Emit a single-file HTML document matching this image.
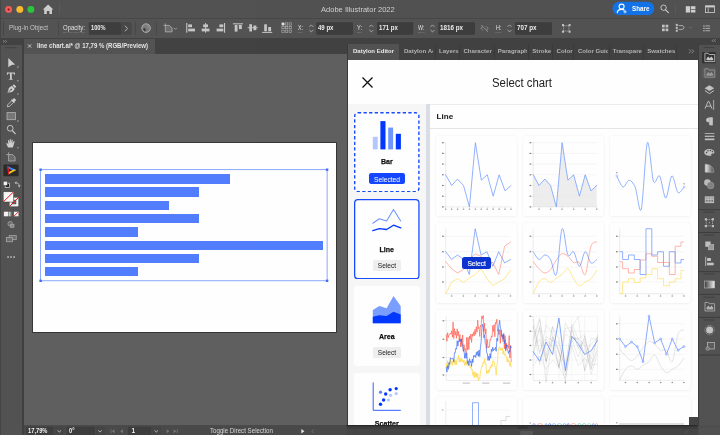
<!DOCTYPE html>
<html>
<head>
<meta charset="utf-8">
<title>Adobe Illustrator 2022</title>
<style>
*{box-sizing:border-box;margin:0;padding:0}
html,body{width:720px;height:435px;overflow:hidden;background:#5d5d5d}
body{font-family:"Liberation Sans",sans-serif;position:relative;color:#d6d6d6}
.a{position:absolute}
.t{position:absolute;white-space:nowrap;line-height:1}
#root{position:absolute;left:0;top:0;width:720px;height:435px;overflow:hidden;background:#606060;will-change:transform;opacity:0.9999}
#appbar{left:0;top:0;width:720px;height:18px;background:#525252}
#appline{left:0;top:17.9px;width:720px;height:1px;background:#484848}
#ctrl{left:0;top:18.9px;width:720px;height:19.1px;background:#535353}
#tabbar{left:0;top:37.8px;width:348px;height:16.7px;background:#424242}
#doctab{left:23.8px;top:38.8px;width:131.2px;height:15.7px;background:#535353}
.inp{position:absolute;top:22.5px;height:12px;background:#3d3d3d;border-radius:1px}
.lbl{position:absolute;white-space:nowrap;line-height:1;font-size:6.6px;color:#d2d2d2;top:25.2px}
.val{position:absolute;white-space:nowrap;line-height:1;font-size:6.6px;color:#ececec;top:25.2px}
.vd{position:absolute;top:21px;width:1px;height:15px;background:#444}
#tools{left:0;top:38px;width:23px;height:397px;background:#535353}
#toolshead{left:0;top:37.8px;width:23px;height:6.8px;background:#424242}
#toolsedge{left:22.2px;top:38px;width:1.5px;height:397px;background:#404040}
#status{left:23.7px;top:425.5px;width:697px;height:10px;background:#4a4a4a}
#art{left:33px;top:143px;width:302.5px;height:189px;background:#fff;box-shadow:0 0 0 0.8px #2c2c2c}
.bar{position:absolute;left:45.4px;height:9.4px;background:#527fff}
#ptabs{left:348px;top:43.5px;width:350px;height:16.5px;background:#424242}
#ptabA{left:348px;top:44.5px;width:51px;height:15.5px;background:#535353}
.pt{position:absolute;white-space:nowrap;line-height:1;font-size:6.3px;font-weight:bold;color:#bdbdbd;top:48px}
#panel{left:348px;top:60px;width:349.5px;height:365.3px;background:#fff;overflow:hidden}
#side{left:0;top:44px;width:78.3px;height:330px;background:#f7f7f7}
#stripe{left:78.3px;top:44px;width:3.7px;height:330px;background:#dbdee7}
#sechead{left:81.7px;top:44.4px;width:270px;height:24.2px;background:#fff;border-bottom:1.2px solid #e6e6e9;border-top:1px solid #ececee}
.card{position:absolute;left:6.2px;width:65.6px;height:80.4px;background:#fff;border-radius:3px}
.ctitle{position:absolute;left:0;width:100%;text-align:center;font-size:8px;font-weight:bold;color:#111;line-height:1;top:47px;transform:scaleX(.88);-webkit-text-stroke:0.25px #111}
.btn{position:absolute;left:18.8px;top:61.1px;width:28px;height:10.8px;border-radius:1.5px;background:#efefef;color:#222;font-size:6.6px;line-height:10.8px;text-align:center;padding-top:0.9px}
#dock{left:698.5px;top:44.6px;width:21.5px;height:391px;background:#535353}
#dockedge{left:697.5px;top:43px;width:1.2px;height:392px;background:#3e3e3e}
#docktop{left:697.5px;top:38px;width:22.5px;height:6.8px;background:#424242}
</style>
</head>
<body>
<div id="root">

<div class="a" id="appbar"></div>
<div class="a" id="appline"></div>
<div class="a" id="ctrl"></div>
<div class="a" id="tabbar"></div>
<div class="a" id="doctab"></div>
<svg class="a" style="left:0;top:0" width="720" height="60" viewBox="0 0 720 60"><rect x="0" y="0" width="0.9" height="60" fill="#444"/>
<circle cx="8.6" cy="9.4" r="3.45" fill="#f45c58"/><circle cx="8.6" cy="9.4" r="1.0" fill="#7a1410"/>
<circle cx="19.8" cy="9.4" r="3.45" fill="#fbbb2d"/>
<circle cx="30.9" cy="9.4" r="3.45" fill="#2bc640"/>
<path d="M48.1,4.6 L53.4,9.4 L52,9.4 L52,13.9 L49.4,13.9 L49.4,10.9 L46.8,10.9 L46.8,13.9 L44.2,13.9 L44.2,9.4 L42.8,9.4 Z" fill="#cdcdcd"/>
<rect x="59.2" y="3.3" width="0.8" height="11.2" fill="#5d5d5d"/>
<rect x="612.5" y="1.8" width="41.8" height="13.3" rx="6.65" fill="#1473e6"/>
<circle cx="621.6" cy="6.6" r="2.5" fill="none" stroke="#fff" stroke-width="1.1"/>
<path d="M617.3,12.6 C617.6,9.8 619.6,9.4 621.6,9.4 C622.8,9.4 623.6,9.6 624.2,10" fill="none" stroke="#fff" stroke-width="1.1" stroke-linecap="round"/>
<path d="M623.4,11.8 H626.6 M625,10.2 V13.4" stroke="#fff" stroke-width="0.8" fill="none"/>
<circle cx="663.6" cy="7.7" r="2.7" fill="none" stroke="#d0d0d0" stroke-width="0.9"/><path d="M665.6,9.8 L668.4,12.7" stroke="#d0d0d0" stroke-width="1.1" stroke-linecap="round"/>
<rect x="675.2" y="3.7" width="0.8" height="10.6" fill="#5d5d5d"/>
<rect x="685.8" y="6.2" width="4.4" height="6.3" fill="#cfcfcf"/><rect x="691" y="6.2" width="4.4" height="2.8" fill="#cfcfcf"/><rect x="691" y="9.7" width="4.4" height="2.8" fill="#cfcfcf"/>
<rect x="705.6" y="5.8" width="8.8" height="6.8" fill="none" stroke="#cfcfcf" stroke-width="0.8"/><rect x="705.6" y="5.8" width="8.8" height="1.6" fill="#cfcfcf"/><rect x="707.8" y="7.4" width="0.7" height="5" fill="#cfcfcf"/>
<rect x="3" y="21.5" width="0.8" height="14" fill="#444"/>
<rect x="58" y="21.5" width="0.8" height="14" fill="#474747"/>
<path d="M63,32.6 H85" stroke="#9a9a9a" stroke-width="0.5" stroke-dasharray="0.7 0.5"/>
<rect x="88.8" y="22.2" width="32.6" height="12.6" rx="1" fill="#3e3e3e"/>
<rect x="121.9" y="22.2" width="9.6" height="12.6" rx="1" fill="#474747"/>
<path d="M125.2,26 L127.6,28.5 L125.2,31" fill="none" stroke="#d0d0d0" stroke-width="0.8" stroke-linecap="round" stroke-linejoin="round"/>
<rect x="135" y="21.5" width="0.8" height="14" fill="#474747"/>
<rect x="156" y="21.5" width="0.8" height="14" fill="#474747"/>
<circle cx="146.1" cy="28.1" r="4.3" fill="#7d7d7d" stroke="#b4b4b4" stroke-width="0.9"/><path d="M143,29 C143.5,27.5 145,27.8 145.6,29 C146.2,30.4 145.2,31.8 144.2,31.2 Z" fill="#3c3c3c"/><path d="M146.5,24.6 C148,25.2 148.8,26.4 148,27.6" fill="none" stroke="#a8a8a8" stroke-width="0.6"/>
<path d="M165.3,25.4 H169.4 L172.1,28 V31.9 H165.3 Z" fill="#6e6e6e" stroke="#bdbdbd" stroke-width="0.7" stroke-linejoin="round"/><path d="M163.4,25.4 H165.3 M165.3,23.4 V25.4" stroke="#bdbdbd" stroke-width="0.7"/>
<path d="M173.9,27.8 L175.4,29.3 L176.9,27.8" fill="none" stroke="#bdbdbd" stroke-width="0.7"/>
<rect x="186.2" y="23" width="1.1" height="9.7" fill="#c6c6c6"/><rect x="188.2" y="24.4" width="3.8" height="2.8" fill="#c6c6c6"/><rect x="188.2" y="28.6" width="6.8" height="2.8" fill="#c6c6c6"/>
<rect x="205.1" y="23" width="1" height="9.7" fill="#c6c6c6"/><rect x="203.2" y="24.4" width="4.8" height="2.8" fill="#c6c6c6"/><rect x="201.7" y="28.6" width="7.8" height="2.8" fill="#c6c6c6"/>
<rect x="224" y="23" width="1.1" height="9.7" fill="#c6c6c6"/><rect x="219.4" y="24.4" width="3.9" height="2.8" fill="#c6c6c6"/><rect x="216.6" y="28.6" width="6.7" height="2.8" fill="#c6c6c6"/>
<rect x="232.9" y="23.3" width="10.1" height="1" fill="#c6c6c6"/><rect x="234.7" y="24.9" width="2.8" height="6.7" fill="#c6c6c6"/><rect x="238.9" y="24.9" width="2.9" height="4.2" fill="#c6c6c6"/>
<rect x="247.6" y="27.3" width="10.2" height="0.9" fill="#c6c6c6"/><rect x="249.3" y="24.2" width="2.7" height="7.3" fill="#c6c6c6"/><rect x="253.4" y="25.5" width="2.9" height="4.7" fill="#c6c6c6"/>
<rect x="262.1" y="31.9" width="10.1" height="1" fill="#c6c6c6"/><rect x="264.2" y="24.3" width="2.7" height="7" fill="#c6c6c6"/><rect x="268.2" y="27" width="2.9" height="4.3" fill="#c6c6c6"/>
<rect x="281.85" y="22.85" width="2.3" height="2.3" fill="#f0f0f0" stroke="#bdbdbd" stroke-width="0.55"/>
<rect x="285.45" y="22.85" width="2.3" height="2.3" fill="none" stroke="#bdbdbd" stroke-width="0.55"/>
<rect x="289.05" y="22.85" width="2.3" height="2.3" fill="none" stroke="#bdbdbd" stroke-width="0.55"/>
<rect x="281.85" y="26.45" width="2.3" height="2.3" fill="none" stroke="#bdbdbd" stroke-width="0.55"/>
<rect x="285.45" y="26.45" width="2.3" height="2.3" fill="none" stroke="#bdbdbd" stroke-width="0.55"/>
<rect x="289.05" y="26.45" width="2.3" height="2.3" fill="none" stroke="#bdbdbd" stroke-width="0.55"/>
<rect x="281.85" y="30.05" width="2.3" height="2.3" fill="none" stroke="#bdbdbd" stroke-width="0.55"/>
<rect x="285.45" y="30.05" width="2.3" height="2.3" fill="none" stroke="#bdbdbd" stroke-width="0.55"/>
<rect x="289.05" y="30.05" width="2.3" height="2.3" fill="none" stroke="#bdbdbd" stroke-width="0.55"/>
<path d="M297.6,32.5 H302.5" stroke="#9a9a9a" stroke-width="0.5" stroke-dasharray="0.7 0.5"/>
<path d="M309.6,26.6 L311.3,24.9 L313.0,26.6 M309.6,30.2 L311.3,31.9 L313.0,30.2" fill="none" stroke="#c8c8c8" stroke-width="0.7" stroke-linecap="round" stroke-linejoin="round"/>
<rect x="316.3" y="22.2" width="36.7" height="12.6" rx="1" fill="#3e3e3e"/>
<path d="M357,32.5 H362" stroke="#9a9a9a" stroke-width="0.5" stroke-dasharray="0.7 0.5"/>
<path d="M369.6,26.6 L371.3,24.9 L373.0,26.6 M369.6,30.2 L371.3,31.9 L373.0,30.2" fill="none" stroke="#c8c8c8" stroke-width="0.7" stroke-linecap="round" stroke-linejoin="round"/>
<rect x="377" y="22.2" width="36.2" height="12.6" rx="1" fill="#3e3e3e"/>
<path d="M418,32.5 H424.4" stroke="#9a9a9a" stroke-width="0.5" stroke-dasharray="0.7 0.5"/>
<path d="M430.8,26.6 L432.5,24.9 L434.2,26.6 M430.8,30.2 L432.5,31.9 L434.2,30.2" fill="none" stroke="#c8c8c8" stroke-width="0.7" stroke-linecap="round" stroke-linejoin="round"/>
<rect x="438.3" y="22.2" width="36.7" height="12.6" rx="1" fill="#3e3e3e"/>
<path d="M495.5,32.5 H500.9" stroke="#9a9a9a" stroke-width="0.5" stroke-dasharray="0.7 0.5"/>
<path d="M507.8,26.6 L509.5,24.9 L511.2,26.6 M507.8,30.2 L509.5,31.9 L511.2,30.2" fill="none" stroke="#c8c8c8" stroke-width="0.7" stroke-linecap="round" stroke-linejoin="round"/>
<rect x="515" y="22.2" width="37" height="12.6" rx="1" fill="#3e3e3e"/>
<g fill="none" stroke="#a0a0a0" stroke-width="0.8" stroke-linecap="round"><path d="M482.2,27 C481,27 480.6,28.2 481.4,29 L482.6,30.2"/><path d="M486.8,29.8 C488,29.8 488.4,28.6 487.6,27.8 L486.4,26.6"/><path d="M481.6,25.2 L487.6,31.6"/></g>
<g fill="none" stroke="#c6c6c6" stroke-width="0.7"><rect x="563.6" y="25.7" width="5.4" height="5.4" stroke-dasharray="1.2 0.8"/></g><g fill="#c6c6c6"><rect x="562" y="24.1" width="2" height="2"/><rect x="568.6" y="24.1" width="2" height="2"/><rect x="562" y="30.7" width="2" height="2"/><rect x="568.6" y="30.7" width="2" height="2"/></g>
<g fill="#c2c2c2"><rect x="662" y="24.7" width="2.7" height="2.7"/><rect x="665.6" y="24.7" width="2.7" height="2.7"/><rect x="662" y="28.5" width="2.7" height="2.7"/><rect x="665.6" y="28.5" width="2.7" height="2.7"/></g>
<g fill="#c2c2c2"><rect x="675.8" y="23.9" width="2" height="2"/><rect x="675.8" y="26.8" width="2" height="2"/><rect x="675.8" y="29.7" width="2" height="2"/></g><path d="M678.6,25.6 H682 C684.6,25.6 684.6,29.4 682,29.4 H678.6" fill="none" stroke="#c2c2c2" stroke-width="0.8"/>
<path d="M689,26.8 L690.5,28.3 L692,26.8" fill="none" stroke="#777" stroke-width="0.7"/>
<g fill="#b8b8b8"><rect x="703.3" y="25.3" width="1.3" height="1.3"/><rect x="703.3" y="27.7" width="1.3" height="1.3"/><rect x="703.3" y="30.1" width="1.3" height="1.3"/><rect x="705.4" y="25.5" width="4.6" height="0.9"/><rect x="705.4" y="27.9" width="4.6" height="0.9"/><rect x="705.4" y="30.3" width="4.6" height="0.9"/></g>
<path d="M28.2,44.6 L31,47.4 M31,44.6 L28.2,47.4" stroke="#e0e0e0" stroke-width="0.8" stroke-linecap="round"/>
<path d="M3.2,40.4 L4.4,41.5 L3.2,42.6 M5.4,40.4 L6.6,41.5 L5.4,42.6" fill="none" stroke="#bdbdbd" stroke-width="0.6"/></svg>
<div class="t" style="left:321.23px;top:5.79px;font-size:7.5px;color:#d0d0d0;transform:scaleX(1.005);transform-origin:0 0;">Adobe Illustrator 2022</div>
<div class="t" style="left:632.00px;top:6.08px;font-size:7.1px;color:#ffffff;font-weight:bold;transform:scaleX(0.887);transform-origin:0 0;">Share</div>
<div class="t" style="left:8.70px;top:25.17px;font-size:6.7px;color:#cacaca;transform:scaleX(0.929);transform-origin:0 0;">Plug-in Object</div>
<div class="t" style="left:63.00px;top:25.17px;font-size:6.7px;color:#e2e2e2;transform:scaleX(0.895);transform-origin:0 0;">Opacity:</div>
<div class="t" style="left:90.80px;top:25.27px;font-size:6.7px;color:#ededed;font-weight:bold;transform:scaleX(0.846);transform-origin:0 0;">100%</div>
<div class="t" style="left:297.60px;top:25.27px;font-size:6.7px;color:#e2e2e2;transform:scaleX(0.774);transform-origin:0 0;">X:</div>
<div class="t" style="left:318.30px;top:25.27px;font-size:6.7px;color:#ededed;font-weight:bold;transform:scaleX(0.905);transform-origin:0 0;">49 px</div>
<div class="t" style="left:357.00px;top:25.27px;font-size:6.7px;color:#e2e2e2;transform:scaleX(0.839);transform-origin:0 0;">Y:</div>
<div class="t" style="left:378.80px;top:25.27px;font-size:6.7px;color:#ededed;font-weight:bold;transform:scaleX(0.911);transform-origin:0 0;">171 px</div>
<div class="t" style="left:418.00px;top:25.27px;font-size:6.7px;color:#e2e2e2;transform:scaleX(0.794);transform-origin:0 0;">W:</div>
<div class="t" style="left:440.00px;top:25.27px;font-size:6.7px;color:#ededed;font-weight:bold;transform:scaleX(0.936);transform-origin:0 0;">1816 px</div>
<div class="t" style="left:495.50px;top:25.27px;font-size:6.7px;color:#e2e2e2;transform:scaleX(0.806);transform-origin:0 0;">H:</div>
<div class="t" style="left:516.80px;top:25.27px;font-size:6.7px;color:#ededed;font-weight:bold;transform:scaleX(0.935);transform-origin:0 0;">707 px</div>
<div class="t" style="left:37.10px;top:42.62px;font-size:6.8px;color:#e6e6e6;font-weight:bold;transform:scaleX(0.889);transform-origin:0 0;">line chart.ai* @ 17,79 % (RGB/Preview)</div>

<div class="a" id="tools"></div>
<div class="a" id="toolshead"></div>
<div class="a" id="toolsedge"></div>
<svg class="a" style="left:0;top:38px" width="24" height="397" viewBox="0 38 24 397"><defs><linearGradient id="gg"><stop offset="0" stop-color="#f0f0f0"/><stop offset="1" stop-color="#555"/></linearGradient></defs><rect x="0" y="38" width="0.9" height="397" fill="#464646"/>
<path d="M3.2,40.3 L4.4,41.4 L3.2,42.5 M5.4,40.3 L6.6,41.4 L5.4,42.5" fill="none" stroke="#bdbdbd" stroke-width="0.6"/>
<rect x="5" y="47.3" width="12" height="0.9" fill="#404040"/>
<path d="M8.3,57.9 L15.1,64.6 L11.6,65 L8.3,67.2 Z" fill="#cfcfcf"/><path d="M18.4,65.80000000000001 V67.4 H16.8 Z" fill="#c8c8c8"/>
<path d="M6.9,72.6 H14.9 V75 H14.3 C14.1,73.9 13.7,73.5 12.6,73.5 H11.8 V78.4 C11.8,79 12.1,79.2 13,79.3 V79.8 H8.8 V79.3 C9.7,79.2 10,79 10,78.4 V73.5 H9.2 C8.1,73.5 7.7,73.9 7.5,75 H6.9 Z" fill="#cfcfcf"/><path d="M18.4,79.60000000000001 V81.2 H16.8 Z" fill="#c8c8c8"/>
<g transform="translate(11.3,89.3) rotate(45)"><path d="M-1.7,-5.4 H1.7 V-3.4 H-1.7 Z M-2.2,-2.8 H2.2 L2.6,0.8 L0,5.4 L-2.6,0.8 Z" fill="#cfcfcf"/><path d="M0,5 V0.6" stroke="#515151" stroke-width="0.7"/><circle cx="0" cy="0.2" r="0.8" fill="#515151"/></g><path d="M18.4,92.9 V94.5 H16.8 Z" fill="#c8c8c8"/>
<g transform="translate(11.2,103) rotate(45)"><path d="M-1.5,-5.6 H1.5 V-3 H2.2 V-1.8 H-2.2 V-3 H-1.5 Z" fill="#cfcfcf"/><path d="M-1.2,-1.6 V3.6 L0,5.4 L1.2,3.6 V-1.6" fill="none" stroke="#cfcfcf" stroke-width="0.8"/></g>
<rect x="7" y="112.6" width="8.5" height="7.1" fill="#777" stroke="#b4b4b4" stroke-width="0.8"/><path d="M18.4,119.80000000000001 V121.4 H16.8 Z" fill="#c8c8c8"/>
<circle cx="10.2" cy="128.3" r="2.9" fill="none" stroke="#cfcfcf" stroke-width="0.9"/><path d="M12.4,130.6 L15.2,133.6" stroke="#cfcfcf" stroke-width="1.2" stroke-linecap="round"/>
<path d="M8.2,147.6 C7.4,146.4 6.6,145 6.3,143.6 C6.2,142.9 7.1,142.7 7.5,143.4 L8.3,144.6 L8,140.6 C8,139.9 9,139.9 9.1,140.6 L9.5,143 L9.8,139.6 C9.9,138.9 10.9,138.9 10.9,139.6 L10.9,143 L11.7,140 C11.9,139.3 12.8,139.5 12.7,140.2 L12.3,143.4 L13.5,141.4 C13.9,140.8 14.7,141.2 14.5,141.9 C14,143.6 13.6,145.2 12.8,147.6 Z" fill="#cfcfcf"/><path d="M18.4,146.70000000000002 V148.3 H16.8 Z" fill="#c8c8c8"/>
<path d="M8.6,154.6 H12.6 L15.1,157 V161 H8.6 Z" fill="#6c6c6c" stroke="#bdbdbd" stroke-width="0.7" stroke-linejoin="round"/><path d="M6.2,154.6 H8.6 M8.6,152.2 V154.6" stroke="#bdbdbd" stroke-width="0.7"/>
<rect x="3.4" y="164.4" width="15.2" height="11.9" rx="1" fill="#2b2b2b"/>
<path d="M6.9,165.8 L16.3,169.9 L14.2,170.9 L8.4,168.4 Z" fill="#2d8cff"/>
<path d="M16.3,169.9 L8.3,174.5 L8.6,172.3 L13.6,169.6 Z" fill="#ffc828"/>
<path d="M6.9,165.8 L8.8,167.6 L9.1,174 L8.3,174.5 Z" fill="#f0141e"/>
<rect x="5.2" y="183.2" width="4.4" height="4.2" fill="#222" stroke="#e8e8e8" stroke-width="0.7"/><rect x="3.2" y="181.2" width="4.2" height="4.2" fill="#f2f2f2" stroke="#333" stroke-width="0.5"/>
<path d="M15.4,182.8 C17.8,182.6 19.2,183.8 19.2,186.2" fill="none" stroke="#bdbdbd" stroke-width="0.9"/><path d="M14.4,182.8 L16.4,181.4 V184.2 Z M19.2,187.6 L17.8,185.6 H20.6 Z" fill="#bdbdbd"/>
<rect x="9.2" y="197.2" width="9.6" height="9.6" fill="#f4f4f4" stroke="#3a3a3a" stroke-width="0.5"/><rect x="12" y="200" width="4" height="4" fill="#6a6a6a" stroke="#3a3a3a" stroke-width="0.4"/><path d="M9.4,206.6 L18.6,197.4" stroke="#f01414" stroke-width="1"/>
<rect x="3.2" y="191.8" width="10.4" height="10.2" fill="#f8f8f8" stroke="#3a3a3a" stroke-width="0.5"/><path d="M3.4,201.8 L13.4,192" stroke="#f01414" stroke-width="1"/>
<rect x="3.9" y="211.7" width="4.1" height="4.6" fill="#f2f2f2"/><rect x="8.6" y="211.7" width="3.6" height="4.6" fill="url(#gg)"/><rect x="13.9" y="211.7" width="4.6" height="4.6" fill="#f4f4f4"/><path d="M14.1,216.1 L18.3,211.9" stroke="#f01414" stroke-width="0.9"/>
<circle cx="10.2" cy="223.8" r="2.3" fill="#6a6a6a" stroke="#b0b0b0" stroke-width="0.7"/><rect x="10.6" y="224.2" width="3.4" height="3.2" fill="#8a8a8a" stroke="#b0b0b0" stroke-width="0.6"/>
<rect x="9.2" y="235.5" width="7" height="4.2" fill="#6e6e6e" stroke="#b0b0b0" stroke-width="0.7"/><rect x="6.4" y="237.4" width="6" height="4.4" fill="#6e6e6e" stroke="#b0b0b0" stroke-width="0.7"/>
<g fill="#b0b0b0"><rect x="7.2" y="256.2" width="1.7" height="1.7"/><rect x="10.2" y="256.2" width="1.7" height="1.7"/><rect x="13.3" y="256.2" width="1.7" height="1.7"/></g></svg>
<div class="a" id="art"></div>
<div class="bar" style="top:174.20px;width:184.8px"></div>
<div class="bar" style="top:187.47px;width:154.0px"></div>
<div class="bar" style="top:200.74px;width:123.2px"></div>
<div class="bar" style="top:214.01px;width:154.0px"></div>
<div class="bar" style="top:227.28px;width:92.4px"></div>
<div class="bar" style="top:240.55px;width:277.2px"></div>
<div class="bar" style="top:253.82px;width:154.0px"></div>
<div class="bar" style="top:267.09px;width:92.4px"></div>
<svg class="a" style="left:0;top:0" width="720" height="435" viewBox="0 0 720 435">
<rect x="40.6" y="169.7" width="286.5" height="111.1" fill="none" stroke="#5a86ff" stroke-width="0.7"/>
<g fill="#3f6df5"><rect x="39.4" y="168.5" width="2.4" height="2.4"/><rect x="325.9" y="168.5" width="2.4" height="2.4"/><rect x="39.4" y="279.6" width="2.4" height="2.4"/><rect x="325.9" y="279.6" width="2.4" height="2.4"/></g>
</svg>
<div class="a" style="left:346.5px;top:38px;width:374px;height:6.5px;background:#424242"></div>
<div class="a" style="left:346.5px;top:44px;width:351.5px;height:16px;background:#424242"></div>
<div class="a" style="left:346.5px;top:44px;width:1.1px;height:382px;background:#3a3a3a"></div>
<div class="a" style="left:347.6px;top:44.3px;width:51.2px;height:15.7px;background:#535353"></div>
<div class="t" style="left:352.90px;top:48.46px;font-size:6.1px;color:#ececec;font-weight:bold;transform:scaleX(0.986);transform-origin:0 0;">Datylon Editor</div>
<div class="a" style="left:403.9px;top:45px;width:29.5px;height:14px;overflow:hidden"><div class="t" style="left:0.00px;top:3.46px;font-size:6.1px;color:#b4b4b4;font-weight:bold;">Datylon Ac</div></div>
<div class="a" style="left:434.5px;top:44.5px;width:0.9px;height:15.5px;background:#3a3a3a"></div>
<div class="t" style="left:439.00px;top:48.46px;font-size:6.1px;color:#b4b4b4;font-weight:bold;">Layers</div>
<div class="a" style="left:459.4px;top:44.5px;width:0.9px;height:15.5px;background:#3a3a3a"></div>
<div class="t" style="left:463.40px;top:48.46px;font-size:6.1px;color:#b4b4b4;font-weight:bold;">Character</div>
<div class="a" style="left:493.9px;top:44.5px;width:0.9px;height:15.5px;background:#3a3a3a"></div>
<div class="a" style="left:497.7px;top:45px;width:29.5px;height:14px;overflow:hidden"><div class="t" style="left:0.00px;top:3.46px;font-size:6.1px;color:#b4b4b4;font-weight:bold;">Paragraph</div></div>
<div class="a" style="left:528.3px;top:44.5px;width:0.9px;height:15.5px;background:#3a3a3a"></div>
<div class="t" style="left:532.30px;top:48.46px;font-size:6.1px;color:#b4b4b4;font-weight:bold;">Stroke</div>
<div class="a" style="left:552.1px;top:44.5px;width:0.9px;height:15.5px;background:#3a3a3a"></div>
<div class="t" style="left:556.60px;top:48.46px;font-size:6.1px;color:#b4b4b4;font-weight:bold;">Color</div>
<div class="a" style="left:573.4px;top:44.5px;width:0.9px;height:15.5px;background:#3a3a3a"></div>
<div class="a" style="left:577.9px;top:45px;width:30.0px;height:14px;overflow:hidden"><div class="t" style="left:0.00px;top:3.46px;font-size:6.1px;color:#b4b4b4;font-weight:bold;">Color Guide</div></div>
<div class="a" style="left:608.6px;top:44.5px;width:0.9px;height:15.5px;background:#3a3a3a"></div>
<div class="t" style="left:612.80px;top:48.46px;font-size:6.1px;color:#b4b4b4;font-weight:bold;">Transpare</div>
<div class="a" style="left:643.4px;top:44.5px;width:0.9px;height:15.5px;background:#3a3a3a"></div>
<div class="t" style="left:647.20px;top:48.46px;font-size:6.1px;color:#b4b4b4;font-weight:bold;">Swatches</div>
<div class="a" style="left:676px;top:44.5px;width:0.9px;height:15.5px;background:#3a3a3a"></div>
<svg class="a" style="left:686px;top:46px" width="10" height="10" viewBox="686 46 10 10"><path d="M689,49.3 L691,51.3 L689,53.3 M691.8,49.3 L693.8,51.3 L691.8,53.3" fill="none" stroke="#9a9a9a" stroke-width="0.8"/></svg>

<div class="a" id="panel">
  <div class="a" id="side"></div>
  <div class="a" id="stripe"></div>
  <div class="a" id="sechead"></div>
  <svg class="a" style="left:14.3px;top:16.9px" width="11" height="11" viewBox="0 0 11 11"><path d="M0.5,0.5 L10.5,10.5 M10.5,0.5 L0.5,10.5" stroke="#111" stroke-width="1.25" fill="none"/></svg>
<div class="t" style="left:144.00px;top:16.52px;font-size:12px;color:#222;transform:scaleX(0.947);transform-origin:0 0;">Select chart</div><div class="t" style="left:88.60px;top:52.80px;font-size:8.1px;color:#141414;font-weight:bold;">Line</div>
  <!-- card 1: Bar (selected) -->
  <div class="card" style="top:52px">
    <svg class="a" style="left:0;top:0" width="65.6" height="80.4" viewBox="0 0 65.6 80.4"><rect x="0.7" y="0.7" width="64.2" height="79" rx="3.2" fill="none" stroke="#1a4cff" stroke-width="1.4" stroke-dasharray="3.3 2.3"/></svg>
    <svg class="a" style="left:0;top:0" width="66" height="80" viewBox="354.2 112 66 80">
      <rect x="373" y="136.8" width="4.9" height="12.6" fill="#b4c8ff"/>
      <rect x="380.6" y="121.1" width="5.1" height="28.3" fill="#0338ff"/>
      <rect x="388.4" y="127.6" width="4.9" height="21.8" fill="#6e97ff"/>
      <rect x="396" y="133.8" width="5.1" height="15.6" fill="#0338ff"/>
    </svg>
    <div class="ctitle" style="top:46px">Bar</div>
    <div class="btn" style="left:14.9px;top:61px;width:35.9px;height:11.3px;line-height:11.3px;border-radius:2.2px;background:#1447ff;color:#fff;font-size:6.7px">Selected</div>
  </div>
  <!-- card 2: Line -->
  <div class="card" style="top:139px">
    <svg class="a" style="left:0;top:0" width="65.6" height="80.4" viewBox="0 0 65.6 80.4"><rect x="0.65" y="0.65" width="64.3" height="79.1" rx="3.2" fill="none" stroke="#1a4cff" stroke-width="1.3"/></svg>
    <svg class="a" style="left:0;top:0" width="66" height="80" viewBox="354.2 199 66 80">
      <polyline points="373,223.3 379.5,218.7 386.8,221 393.7,209.5 400.9,221" fill="none" stroke="#6e97ff" stroke-width="1.05" stroke-linejoin="round" stroke-linecap="round"/>
      <polyline points="373,230.7 379.5,228.6 386.8,229.5 393.7,225.2 400.9,227.9" fill="none" stroke="#0338ff" stroke-width="1.3" stroke-linejoin="round" stroke-linecap="round"/>
    </svg>
    <div class="ctitle" style="top:46.7px">Line</div>
    <div class="btn" style="left:18.8px;top:61.1px">Select</div>
  </div>
  <!-- card 3: Area -->
  <div class="card" style="top:226px">
    <svg class="a" style="left:0;top:0" width="66" height="80" viewBox="354.2 286 66 80">
      <polygon points="373,309.9 379.5,306 386.8,308.3 393.7,296.1 400.9,306 400.9,323.2 373,323.2" fill="#7a9fff"/>
      <polygon points="373,316.8 379.5,315.2 386.8,316.1 393.7,311.7 400.9,314.5 400.9,323.2 373,323.2" fill="#0338ff"/>
    </svg>
    <div class="ctitle" style="top:46.7px">Area</div>
    <div class="btn" style="top:61.4px">Select</div>
  </div>
  <!-- card 4: Scatter -->
  <div class="card" style="top:313px">
    <svg class="a" style="left:0;top:0" width="66" height="80" viewBox="354.2 373 66 80">
      <path d="M373.4,382.4 V410.3 H401" fill="none" stroke="#0338ff" stroke-width="0.8"/>
      <g fill="#0338ff"><circle cx="380.7" cy="404.3" r="1.7"/><circle cx="383.8" cy="400" r="1.7"/><circle cx="385.9" cy="394" r="1.7"/><circle cx="390.3" cy="389.8" r="1.7"/><circle cx="396.4" cy="388.6" r="1.6"/></g>
      <circle cx="380.7" cy="392.2" r="1.6" fill="#5a86ff"/>
      <g fill="#b4c8ff"><circle cx="388.6" cy="400" r="1.6"/><circle cx="390.7" cy="395.3" r="1.6"/><circle cx="396.4" cy="393.6" r="1.6"/></g>
    </svg>
    <div class="ctitle" style="top:46.8px">Scatter</div>
  </div>
<svg class="a" style="left:0;top:0" width="349.5" height="365.3" viewBox="348 60 349.5 365.3"><defs><filter id="sh" x="-10%" y="-10%" width="120%" height="120%"><feDropShadow dx="0" dy="0.4" stdDeviation="1" flood-color="#1e2030" flood-opacity="0.085"/></filter></defs>
<rect x="436.2" y="136.0" width="80.5" height="80" rx="3" fill="#fff" filter="url(#sh)"/>
<rect x="523.2" y="136.0" width="80.5" height="80" rx="3" fill="#fff" filter="url(#sh)"/>
<rect x="610.2" y="136.0" width="80.5" height="80" rx="3" fill="#fff" filter="url(#sh)"/>
<rect x="436.2" y="223.0" width="80.5" height="80" rx="3" fill="#fff" filter="url(#sh)"/>
<rect x="523.2" y="223.0" width="80.5" height="80" rx="3" fill="#fff" filter="url(#sh)"/>
<rect x="610.2" y="223.0" width="80.5" height="80" rx="3" fill="#fff" filter="url(#sh)"/>
<rect x="436.2" y="310.0" width="80.5" height="80" rx="3" fill="#fff" filter="url(#sh)"/>
<rect x="523.2" y="310.0" width="80.5" height="80" rx="3" fill="#fff" filter="url(#sh)"/>
<rect x="610.2" y="310.0" width="80.5" height="80" rx="3" fill="#fff" filter="url(#sh)"/>
<rect x="436.2" y="397.0" width="80.5" height="80" rx="3" fill="#fff" filter="url(#sh)"/>
<rect x="523.2" y="397.0" width="80.5" height="80" rx="3" fill="#fff" filter="url(#sh)"/>
<rect x="610.2" y="397.0" width="80.5" height="80" rx="3" fill="#fff" filter="url(#sh)"/>
<line x1="445.7" y1="142.7" x2="445.7" y2="206.9" stroke="#dcdcdc" stroke-width="0.5"/><line x1="445.7" y1="206.9" x2="511.0" y2="206.9" stroke="#dcdcdc" stroke-width="0.5"/>
<rect x="442.00" y="206.30" width="1.7" height="1.2" fill="#808080"/><rect x="444.50" y="206.70" width="1.2" height="0.4" fill="#c4c4c4"/><rect x="442.00" y="195.60" width="1.7" height="1.2" fill="#808080"/><rect x="444.50" y="196.00" width="1.2" height="0.4" fill="#c4c4c4"/><rect x="442.00" y="184.90" width="1.7" height="1.2" fill="#808080"/><rect x="444.50" y="185.30" width="1.2" height="0.4" fill="#c4c4c4"/><rect x="442.00" y="174.20" width="1.7" height="1.2" fill="#808080"/><rect x="444.50" y="174.60" width="1.2" height="0.4" fill="#c4c4c4"/><rect x="442.00" y="163.50" width="1.7" height="1.2" fill="#808080"/><rect x="444.50" y="163.90" width="1.2" height="0.4" fill="#c4c4c4"/><rect x="442.00" y="152.80" width="1.7" height="1.2" fill="#808080"/><rect x="444.50" y="153.20" width="1.2" height="0.4" fill="#c4c4c4"/><rect x="442.00" y="142.10" width="1.7" height="1.2" fill="#808080"/><rect x="444.50" y="142.50" width="1.2" height="0.4" fill="#c4c4c4"/>
<rect x="445.00" y="208.60" width="1.4" height="1.1" fill="#8c8c8c"/><rect x="445.50" y="206.90" width="0.4" height="1" fill="#c4c4c4"/><rect x="450.94" y="208.60" width="1.4" height="1.1" fill="#8c8c8c"/><rect x="451.44" y="206.90" width="0.4" height="1" fill="#c4c4c4"/><rect x="456.87" y="208.60" width="1.4" height="1.1" fill="#8c8c8c"/><rect x="457.37" y="206.90" width="0.4" height="1" fill="#c4c4c4"/><rect x="462.81" y="208.60" width="1.4" height="1.1" fill="#8c8c8c"/><rect x="463.31" y="206.90" width="0.4" height="1" fill="#c4c4c4"/><rect x="468.75" y="208.60" width="1.4" height="1.1" fill="#8c8c8c"/><rect x="469.25" y="206.90" width="0.4" height="1" fill="#c4c4c4"/><rect x="474.68" y="208.60" width="1.4" height="1.1" fill="#8c8c8c"/><rect x="475.18" y="206.90" width="0.4" height="1" fill="#c4c4c4"/><rect x="480.62" y="208.60" width="1.4" height="1.1" fill="#8c8c8c"/><rect x="481.12" y="206.90" width="0.4" height="1" fill="#c4c4c4"/><rect x="486.55" y="208.60" width="1.4" height="1.1" fill="#8c8c8c"/><rect x="487.05" y="206.90" width="0.4" height="1" fill="#c4c4c4"/><rect x="492.49" y="208.60" width="1.4" height="1.1" fill="#8c8c8c"/><rect x="492.99" y="206.90" width="0.4" height="1" fill="#c4c4c4"/><rect x="498.43" y="208.60" width="1.4" height="1.1" fill="#8c8c8c"/><rect x="498.93" y="206.90" width="0.4" height="1" fill="#c4c4c4"/><rect x="504.36" y="208.60" width="1.4" height="1.1" fill="#8c8c8c"/><rect x="504.86" y="206.90" width="0.4" height="1" fill="#c4c4c4"/><rect x="510.30" y="208.60" width="1.4" height="1.1" fill="#8c8c8c"/><rect x="510.80" y="206.90" width="0.4" height="1" fill="#c4c4c4"/>
<polyline points="445.70,174.80 451.64,185.50 457.57,179.08 463.51,185.50 469.45,206.90 475.38,142.70 481.32,180.15 487.25,174.80 493.19,196.20 499.13,174.80 505.06,190.85 511.00,185.50" fill="none" stroke="#6e97ff" stroke-width="0.75" stroke-linejoin="round" stroke-linecap="round" />
<path d="M533.25,174.80 L539.02,185.50 L544.80,179.08 L550.57,185.50 L556.34,206.90 L562.11,142.70 L567.89,180.15 L573.66,174.80 L579.43,196.20 L585.20,174.80 L590.98,190.85 L596.75,185.50 L596.75,206.9 L533.25,206.9 Z" fill="#eeeeee"/>
<line x1="533.25" y1="196.20" x2="596.75" y2="196.20" stroke="#ececec" stroke-width="0.5"/><line x1="533.25" y1="185.50" x2="596.75" y2="185.50" stroke="#ececec" stroke-width="0.5"/><line x1="533.25" y1="174.80" x2="596.75" y2="174.80" stroke="#ececec" stroke-width="0.5"/><line x1="533.25" y1="164.10" x2="596.75" y2="164.10" stroke="#ececec" stroke-width="0.5"/><line x1="533.25" y1="153.40" x2="596.75" y2="153.40" stroke="#ececec" stroke-width="0.5"/><line x1="533.25" y1="142.70" x2="596.75" y2="142.70" stroke="#ececec" stroke-width="0.5"/><line x1="533.25" y1="142.7" x2="533.25" y2="206.9" stroke="#dcdcdc" stroke-width="0.5"/><line x1="533.25" y1="206.9" x2="596.75" y2="206.9" stroke="#dcdcdc" stroke-width="0.5"/>
<rect x="529.55" y="206.30" width="1.7" height="1.2" fill="#808080"/><rect x="532.05" y="206.70" width="1.2" height="0.4" fill="#c4c4c4"/><rect x="529.55" y="195.60" width="1.7" height="1.2" fill="#808080"/><rect x="532.05" y="196.00" width="1.2" height="0.4" fill="#c4c4c4"/><rect x="529.55" y="184.90" width="1.7" height="1.2" fill="#808080"/><rect x="532.05" y="185.30" width="1.2" height="0.4" fill="#c4c4c4"/><rect x="529.55" y="174.20" width="1.7" height="1.2" fill="#808080"/><rect x="532.05" y="174.60" width="1.2" height="0.4" fill="#c4c4c4"/><rect x="529.55" y="163.50" width="1.7" height="1.2" fill="#808080"/><rect x="532.05" y="163.90" width="1.2" height="0.4" fill="#c4c4c4"/><rect x="529.55" y="152.80" width="1.7" height="1.2" fill="#808080"/><rect x="532.05" y="153.20" width="1.2" height="0.4" fill="#c4c4c4"/><rect x="529.55" y="142.10" width="1.7" height="1.2" fill="#808080"/><rect x="532.05" y="142.50" width="1.2" height="0.4" fill="#c4c4c4"/>
<rect x="538.32" y="208.60" width="1.4" height="1.1" fill="#8c8c8c"/><rect x="538.82" y="206.90" width="0.4" height="1" fill="#c4c4c4"/><rect x="549.87" y="208.60" width="1.4" height="1.1" fill="#8c8c8c"/><rect x="550.37" y="206.90" width="0.4" height="1" fill="#c4c4c4"/><rect x="561.41" y="208.60" width="1.4" height="1.1" fill="#8c8c8c"/><rect x="561.91" y="206.90" width="0.4" height="1" fill="#c4c4c4"/><rect x="572.96" y="208.60" width="1.4" height="1.1" fill="#8c8c8c"/><rect x="573.46" y="206.90" width="0.4" height="1" fill="#c4c4c4"/><rect x="584.50" y="208.60" width="1.4" height="1.1" fill="#8c8c8c"/><rect x="585.00" y="206.90" width="0.4" height="1" fill="#c4c4c4"/><rect x="596.05" y="208.60" width="1.4" height="1.1" fill="#8c8c8c"/><rect x="596.55" y="206.90" width="0.4" height="1" fill="#c4c4c4"/>
<polyline points="533.25,174.80 539.02,185.50 544.80,179.08 550.57,185.50 556.34,206.90 562.11,142.70 567.89,180.15 573.66,174.80 579.43,196.20 585.20,174.80 590.98,190.85 596.75,185.50" fill="none" stroke="#6e97ff" stroke-width="0.75" stroke-linejoin="round" stroke-linecap="round" />
<path d="M616.80,175.90 C617.72,177.56 621.08,186.33 622.92,187.00 C624.75,187.67 627.20,180.34 629.04,180.34 C630.87,180.34 633.32,182.67 635.15,187.00 C636.99,191.33 639.44,215.86 641.27,209.20 C643.11,202.54 645.56,146.76 647.39,142.60 C649.23,138.44 651.67,176.45 653.51,181.45 C655.34,186.44 657.79,173.40 659.63,175.90 C661.46,178.40 663.91,198.10 665.75,198.10 C667.58,198.10 670.03,176.73 671.86,175.90 C673.70,175.07 676.15,190.88 677.98,192.55 C679.82,194.21 683.18,187.83 684.10,187.00" fill="none" stroke="#6e97ff" stroke-width="0.75" stroke-linecap="round"/>
<circle cx="616.80" cy="175.90" r="0.9" fill="#fff" stroke="#6e97ff" stroke-width="0.5"/>
<rect x="616.00" y="172.30" width="1.6" height="0.9" fill="#8a8a8a"/>
<circle cx="684.10" cy="187.00" r="0.9" fill="#fff" stroke="#6e97ff" stroke-width="0.5"/>
<rect x="683.30" y="183.40" width="1.6" height="0.9" fill="#8a8a8a"/>
<line x1="445.75" y1="236.25" x2="510.5" y2="236.25" stroke="#ececec" stroke-width="0.5"/><line x1="445.75" y1="251.75" x2="510.5" y2="251.75" stroke="#ececec" stroke-width="0.5"/><line x1="445.75" y1="267.00" x2="510.5" y2="267.00" stroke="#ececec" stroke-width="0.5"/><line x1="445.75" y1="282.00" x2="510.5" y2="282.00" stroke="#ececec" stroke-width="0.5"/><line x1="445.75" y1="228.75" x2="445.75" y2="293.75" stroke="#dcdcdc" stroke-width="0.5"/><line x1="445.75" y1="293.75" x2="510.5" y2="293.75" stroke="#dcdcdc" stroke-width="0.5"/><rect x="442.05" y="235.65" width="1.7" height="1.2" fill="#808080"/><rect x="444.55" y="236.05" width="1.2" height="0.4" fill="#c4c4c4"/><rect x="442.05" y="251.15" width="1.7" height="1.2" fill="#808080"/><rect x="444.55" y="251.55" width="1.2" height="0.4" fill="#c4c4c4"/><rect x="442.05" y="266.40" width="1.7" height="1.2" fill="#808080"/><rect x="444.55" y="266.80" width="1.2" height="0.4" fill="#c4c4c4"/><rect x="442.05" y="281.40" width="1.7" height="1.2" fill="#808080"/><rect x="444.55" y="281.80" width="1.2" height="0.4" fill="#c4c4c4"/><rect x="450.94" y="295.45" width="1.4" height="1.1" fill="#8c8c8c"/><rect x="451.44" y="293.75" width="0.4" height="1" fill="#c4c4c4"/><rect x="462.71" y="295.45" width="1.4" height="1.1" fill="#8c8c8c"/><rect x="463.21" y="293.75" width="0.4" height="1" fill="#c4c4c4"/><rect x="474.48" y="295.45" width="1.4" height="1.1" fill="#8c8c8c"/><rect x="474.98" y="293.75" width="0.4" height="1" fill="#c4c4c4"/><rect x="486.25" y="295.45" width="1.4" height="1.1" fill="#8c8c8c"/><rect x="486.75" y="293.75" width="0.4" height="1" fill="#c4c4c4"/><rect x="498.03" y="295.45" width="1.4" height="1.1" fill="#8c8c8c"/><rect x="498.53" y="293.75" width="0.4" height="1" fill="#c4c4c4"/><rect x="509.80" y="295.45" width="1.4" height="1.1" fill="#8c8c8c"/><rect x="510.30" y="293.75" width="0.4" height="1" fill="#c4c4c4"/><polyline points="445.75,293.75 451.64,282.00 457.52,278.75 463.41,282.50 469.30,278.00 475.18,274.50 481.07,268.75 486.95,278.75 492.84,285.75 498.73,282.00 504.61,278.75 510.50,270.50" fill="none" stroke="#ffe26e" stroke-width="0.75" stroke-linejoin="round" stroke-linecap="round" /><polyline points="445.75,261.75 451.64,268.75 457.52,273.00 463.41,269.50 469.30,260.00 475.18,253.75 481.07,256.25 486.95,262.50 492.84,262.50 498.73,274.50 504.61,246.25 510.50,242.00" fill="none" stroke="#ff9d8f" stroke-width="0.75" stroke-linejoin="round" stroke-linecap="round" /><polyline points="445.75,251.75 451.64,259.50 457.52,255.00 463.41,259.50 469.30,274.50 475.18,228.75 481.07,255.00 486.95,251.75 492.84,266.25 498.73,251.75 504.61,263.00 510.50,259.50" fill="none" stroke="#6e97ff" stroke-width="0.75" stroke-linejoin="round" stroke-linecap="round" />
<line x1="533.25" y1="236.25" x2="596.75" y2="236.25" stroke="#ececec" stroke-width="0.5"/><line x1="533.25" y1="251.75" x2="596.75" y2="251.75" stroke="#ececec" stroke-width="0.5"/><line x1="533.25" y1="267.00" x2="596.75" y2="267.00" stroke="#ececec" stroke-width="0.5"/><line x1="533.25" y1="282.00" x2="596.75" y2="282.00" stroke="#ececec" stroke-width="0.5"/><line x1="533.25" y1="228.75" x2="533.25" y2="293.75" stroke="#dcdcdc" stroke-width="0.5"/><line x1="533.25" y1="293.75" x2="596.75" y2="293.75" stroke="#dcdcdc" stroke-width="0.5"/><rect x="529.55" y="235.65" width="1.7" height="1.2" fill="#808080"/><rect x="532.05" y="236.05" width="1.2" height="0.4" fill="#c4c4c4"/><rect x="529.55" y="251.15" width="1.7" height="1.2" fill="#808080"/><rect x="532.05" y="251.55" width="1.2" height="0.4" fill="#c4c4c4"/><rect x="529.55" y="266.40" width="1.7" height="1.2" fill="#808080"/><rect x="532.05" y="266.80" width="1.2" height="0.4" fill="#c4c4c4"/><rect x="529.55" y="281.40" width="1.7" height="1.2" fill="#808080"/><rect x="532.05" y="281.80" width="1.2" height="0.4" fill="#c4c4c4"/><rect x="538.32" y="295.45" width="1.4" height="1.1" fill="#8c8c8c"/><rect x="538.82" y="293.75" width="0.4" height="1" fill="#c4c4c4"/><rect x="549.87" y="295.45" width="1.4" height="1.1" fill="#8c8c8c"/><rect x="550.37" y="293.75" width="0.4" height="1" fill="#c4c4c4"/><rect x="561.41" y="295.45" width="1.4" height="1.1" fill="#8c8c8c"/><rect x="561.91" y="293.75" width="0.4" height="1" fill="#c4c4c4"/><rect x="572.96" y="295.45" width="1.4" height="1.1" fill="#8c8c8c"/><rect x="573.46" y="293.75" width="0.4" height="1" fill="#c4c4c4"/><rect x="584.50" y="295.45" width="1.4" height="1.1" fill="#8c8c8c"/><rect x="585.00" y="293.75" width="0.4" height="1" fill="#c4c4c4"/><rect x="596.05" y="295.45" width="1.4" height="1.1" fill="#8c8c8c"/><rect x="596.55" y="293.75" width="0.4" height="1" fill="#c4c4c4"/><path d="M533.25,293.75 C534.21,291.79 537.10,284.50 539.02,282.00 C540.95,279.50 542.87,278.67 544.80,278.75 C546.72,278.83 548.64,282.62 550.57,282.50 C552.49,282.38 554.42,279.33 556.34,278.00 C558.27,276.67 560.19,276.04 562.11,274.50 C564.04,272.96 565.96,268.04 567.89,268.75 C569.81,269.46 571.73,275.92 573.66,278.75 C575.58,281.58 577.51,285.21 579.43,285.75 C581.36,286.29 583.28,283.17 585.20,282.00 C587.13,280.83 589.05,280.67 590.98,278.75 C592.90,276.83 595.79,271.88 596.75,270.50" fill="none" stroke="#ffe26e" stroke-width="0.75" stroke-linecap="round"/><path d="M533.25,261.75 C534.21,262.92 537.10,266.88 539.02,268.75 C540.95,270.62 542.87,272.88 544.80,273.00 C546.72,273.12 548.64,271.67 550.57,269.50 C552.49,267.33 554.42,262.62 556.34,260.00 C558.27,257.38 560.19,254.38 562.11,253.75 C564.04,253.12 565.96,254.79 567.89,256.25 C569.81,257.71 571.73,261.46 573.66,262.50 C575.58,263.54 577.51,260.50 579.43,262.50 C581.36,264.50 583.28,277.21 585.20,274.50 C587.13,271.79 589.05,251.67 590.98,246.25 C592.90,240.83 595.79,242.71 596.75,242.00" fill="none" stroke="#ff9d8f" stroke-width="0.75" stroke-linecap="round"/><path d="M533.25,251.75 C534.21,253.04 537.10,258.96 539.02,259.50 C540.95,260.04 542.87,255.00 544.80,255.00 C546.72,255.00 548.64,256.25 550.57,259.50 C552.49,262.75 554.42,279.62 556.34,274.50 C558.27,269.38 560.19,232.00 562.11,228.75 C564.04,225.50 565.96,251.17 567.89,255.00 C569.81,258.83 571.73,249.88 573.66,251.75 C575.58,253.62 577.51,266.25 579.43,266.25 C581.36,266.25 583.28,252.29 585.20,251.75 C587.13,251.21 589.05,261.71 590.98,263.00 C592.90,264.29 595.79,260.08 596.75,259.50" fill="none" stroke="#6e97ff" stroke-width="0.75" stroke-linecap="round"/>
<line x1="619.7" y1="236.25" x2="683.9" y2="236.25" stroke="#ececec" stroke-width="0.5"/><line x1="619.7" y1="251.75" x2="683.9" y2="251.75" stroke="#ececec" stroke-width="0.5"/><line x1="619.7" y1="267.00" x2="683.9" y2="267.00" stroke="#ececec" stroke-width="0.5"/><line x1="619.7" y1="282.00" x2="683.9" y2="282.00" stroke="#ececec" stroke-width="0.5"/><line x1="619.7" y1="228.75" x2="619.7" y2="293.75" stroke="#dcdcdc" stroke-width="0.5"/><line x1="619.7" y1="293.75" x2="683.9" y2="293.75" stroke="#dcdcdc" stroke-width="0.5"/><rect x="616.00" y="235.65" width="1.7" height="1.2" fill="#808080"/><rect x="618.50" y="236.05" width="1.2" height="0.4" fill="#c4c4c4"/><rect x="616.00" y="251.15" width="1.7" height="1.2" fill="#808080"/><rect x="618.50" y="251.55" width="1.2" height="0.4" fill="#c4c4c4"/><rect x="616.00" y="266.40" width="1.7" height="1.2" fill="#808080"/><rect x="618.50" y="266.80" width="1.2" height="0.4" fill="#c4c4c4"/><rect x="616.00" y="281.40" width="1.7" height="1.2" fill="#808080"/><rect x="618.50" y="281.80" width="1.2" height="0.4" fill="#c4c4c4"/><rect x="624.84" y="295.45" width="1.4" height="1.1" fill="#8c8c8c"/><rect x="625.34" y="293.75" width="0.4" height="1" fill="#c4c4c4"/><rect x="636.51" y="295.45" width="1.4" height="1.1" fill="#8c8c8c"/><rect x="637.01" y="293.75" width="0.4" height="1" fill="#c4c4c4"/><rect x="648.18" y="295.45" width="1.4" height="1.1" fill="#8c8c8c"/><rect x="648.68" y="293.75" width="0.4" height="1" fill="#c4c4c4"/><rect x="659.85" y="295.45" width="1.4" height="1.1" fill="#8c8c8c"/><rect x="660.35" y="293.75" width="0.4" height="1" fill="#c4c4c4"/><rect x="671.53" y="295.45" width="1.4" height="1.1" fill="#8c8c8c"/><rect x="672.03" y="293.75" width="0.4" height="1" fill="#c4c4c4"/><rect x="683.20" y="295.45" width="1.4" height="1.1" fill="#8c8c8c"/><rect x="683.70" y="293.75" width="0.4" height="1" fill="#c4c4c4"/><path d="M619.70,293.75 H622.62 V282.00 H628.45 V278.75 H634.29 V282.50 H640.13 V278.00 H645.96 V274.50 H651.80 V268.75 H657.64 V278.75 H663.47 V285.75 H669.31 V282.00 H675.15 V278.75 H680.98 V270.50 H683.90" fill="none" stroke="#ffe26e" stroke-width="0.75"/><path d="M619.70,261.75 H622.62 V268.75 H628.45 V273.00 H634.29 V269.50 H640.13 V260.00 H645.96 V253.75 H651.80 V256.25 H657.64 V262.50 H663.47 V262.50 H669.31 V274.50 H675.15 V246.25 H680.98 V242.00 H683.90" fill="none" stroke="#ff9d8f" stroke-width="0.75"/><path d="M619.70,251.75 H622.62 V259.50 H628.45 V255.00 H634.29 V259.50 H640.13 V274.50 H645.96 V228.75 H651.80 V255.00 H657.64 V251.75 H663.47 V266.25 H669.31 V251.75 H675.15 V263.00 H680.98 V259.50 H683.90" fill="none" stroke="#6e97ff" stroke-width="0.75"/>
<line x1="446.25" y1="320.75" x2="511.25" y2="320.75" stroke="#ececec" stroke-width="0.5"/><line x1="446.25" y1="339.25" x2="511.25" y2="339.25" stroke="#ececec" stroke-width="0.5"/><line x1="446.25" y1="357.50" x2="511.25" y2="357.50" stroke="#ececec" stroke-width="0.5"/><line x1="446.25" y1="375.00" x2="511.25" y2="375.00" stroke="#ececec" stroke-width="0.5"/><line x1="446.25" y1="316" x2="446.25" y2="380.5" stroke="#dcdcdc" stroke-width="0.5"/><line x1="446.25" y1="380.5" x2="511.25" y2="380.5" stroke="#dcdcdc" stroke-width="0.5"/>
<rect x="442.55" y="320.15" width="1.7" height="1.2" fill="#808080"/><rect x="445.05" y="320.55" width="1.2" height="0.4" fill="#c4c4c4"/><rect x="442.55" y="338.65" width="1.7" height="1.2" fill="#808080"/><rect x="445.05" y="339.05" width="1.2" height="0.4" fill="#c4c4c4"/><rect x="442.55" y="356.90" width="1.7" height="1.2" fill="#808080"/><rect x="445.05" y="357.30" width="1.2" height="0.4" fill="#c4c4c4"/><rect x="442.55" y="374.40" width="1.7" height="1.2" fill="#808080"/><rect x="445.05" y="374.80" width="1.2" height="0.4" fill="#c4c4c4"/>
<polyline points="446.25,334.79 446.93,341.30 447.62,332.70 448.30,337.74 448.99,334.76 449.67,334.54 450.36,333.06 451.04,334.23 451.72,330.80 452.41,337.18 453.09,321.93 453.78,338.56 454.46,328.59 455.14,335.20 455.83,331.48 456.51,338.23 457.20,328.76 457.88,335.75 458.57,331.42 459.25,340.71 459.93,334.41 460.62,346.90 461.30,338.51 461.99,346.41 462.67,334.95 463.36,351.29 464.04,344.71 464.72,350.36 465.41,348.77 466.09,353.91 466.78,337.19 467.46,349.87 468.14,337.46 468.83,349.56 469.51,335.91 470.20,339.30 470.88,334.01 471.57,342.42 472.25,333.92 472.93,336.30 473.62,331.91 474.30,335.75 474.99,329.29 475.67,334.43 476.36,326.74 477.04,332.15 477.72,320.18 478.41,328.52 479.09,327.27 479.78,336.47 480.46,325.18 481.14,326.50 481.83,315.99 482.51,319.02 483.20,315.50 483.88,331.31 484.57,323.12 485.25,334.36 485.93,328.88 486.62,348.21 487.30,339.42 487.99,347.96 488.67,346.63 489.36,347.33 490.04,339.46 490.72,340.12 491.41,335.82 492.09,337.02 492.78,325.51 493.46,331.60 494.14,324.47 494.83,336.78 495.51,322.25 496.20,323.60 496.88,319.18 497.57,330.82 498.25,329.85 498.93,334.59 499.62,329.32 500.30,343.36 500.99,330.00 501.67,337.21 502.36,334.92 503.04,341.65 503.72,334.38 504.41,348.77 505.09,335.58 505.78,351.17 506.46,343.21 507.14,347.11 507.83,344.95 508.51,348.44 509.20,335.60 509.88,358.01 510.57,345.34 511.25,361.76" fill="none" stroke="#ff5a4a" stroke-width="0.68" stroke-linejoin="round" stroke-linecap="round" opacity="0.95"/>
<polyline points="446.25,363.53 446.93,367.94 447.62,360.56 448.30,367.03 448.99,363.17 449.67,367.55 450.36,359.41 451.04,363.53 451.72,361.17 452.41,365.40 453.09,360.58 453.78,363.03 454.46,359.18 455.14,364.99 455.83,360.20 456.51,364.65 457.20,358.50 457.88,359.01 458.57,355.24 459.25,361.97 459.93,358.00 460.62,362.05 461.30,358.30 461.99,361.36 462.67,359.59 463.36,362.83 464.04,360.38 464.72,365.46 465.41,362.19 466.09,365.28 466.78,360.77 467.46,365.26 468.14,365.08 468.83,366.05 469.51,363.06 470.20,367.89 470.88,366.53 471.57,370.11 472.25,369.30 472.93,375.33 473.62,371.92 474.30,377.79 474.99,371.78 475.67,376.76 476.36,373.01 477.04,377.63 477.72,373.77 478.41,380.50 479.09,378.39 479.78,378.87 480.46,371.95 481.14,369.22 481.83,365.71 482.51,366.65 483.20,361.94 483.88,363.63 484.57,358.71 485.25,364.26 485.93,363.96 486.62,373.72 487.30,370.74 487.99,373.44 488.67,369.73 489.36,371.88 490.04,366.86 490.72,368.28 491.41,364.61 492.09,366.58 492.78,360.70 493.46,360.93 494.14,362.12 494.83,365.58 495.51,368.18 496.20,375.15 496.88,365.81 497.57,360.67 498.25,348.95 498.93,347.84 499.62,346.62 500.30,350.25 500.99,348.24 501.67,350.23 502.36,347.76 503.04,354.15 503.72,350.60 504.41,355.23 505.09,353.83 505.78,356.38 506.46,356.33 507.14,361.95 507.83,358.05 508.51,362.22 509.20,360.68 509.88,366.17 510.57,362.57 511.25,366.97" fill="none" stroke="#ffd52e" stroke-width="0.68" stroke-linejoin="round" stroke-linecap="round" opacity="0.95"/>
<polyline points="446.25,367.25 446.93,372.10 447.62,365.55 448.30,369.36 448.99,362.47 449.67,364.50 450.36,357.72 451.04,358.94 451.72,358.87 452.41,358.63 453.09,358.18 453.78,361.98 454.46,352.84 455.14,353.03 455.83,348.27 456.51,349.18 457.20,340.72 457.88,346.12 458.57,340.77 459.25,341.80 459.93,339.09 460.62,341.42 461.30,339.17 461.99,344.05 462.67,345.37 463.36,351.11 464.04,350.64 464.72,358.27 465.41,353.54 466.09,358.34 466.78,352.78 467.46,363.55 468.14,360.73 468.83,365.49 469.51,358.79 470.20,362.59 470.88,360.98 471.57,366.43 472.25,358.97 472.93,362.65 473.62,355.59 474.30,356.77 474.99,355.21 475.67,357.53 476.36,352.38 477.04,355.29 477.72,351.23 478.41,356.34 479.09,349.98 479.78,356.53 480.46,346.82 481.14,342.01 481.83,328.71 482.51,324.38 483.20,326.78 483.88,337.83 484.57,334.90 485.25,343.47 485.93,344.02 486.62,352.68 487.30,353.07 487.99,360.41 488.67,356.16 489.36,360.47 490.04,353.67 490.72,358.29 491.41,349.15 492.09,351.50 492.78,347.15 493.46,350.64 494.14,349.08 494.83,349.59 495.51,347.31 496.20,351.30 496.88,338.33 497.57,341.13 498.25,330.57 498.93,325.62 499.62,320.32 500.30,327.10 500.99,329.49 501.67,335.49 502.36,334.84 503.04,339.09 503.72,333.47 504.41,343.52 505.09,340.18 505.78,349.47 506.46,344.88 507.14,348.84 507.83,350.60 508.51,353.54 509.20,350.48 509.88,351.69 510.57,346.02 511.25,347.52" fill="none" stroke="#3366f6" stroke-width="0.68" stroke-linejoin="round" stroke-linecap="round" opacity="0.95"/>
<rect x="462.70" y="382.6" width="7.2" height="1" fill="#bdbdbd"/>
<rect x="482.20" y="382.6" width="7.2" height="1" fill="#bdbdbd"/>
<rect x="503.00" y="382.6" width="7.2" height="1" fill="#bdbdbd"/>
<line x1="533.25" y1="316.25" x2="597.5" y2="316.25" stroke="#ececec" stroke-width="0.5"/><line x1="533.25" y1="331.25" x2="597.5" y2="331.25" stroke="#ececec" stroke-width="0.5"/><line x1="533.25" y1="345.50" x2="597.5" y2="345.50" stroke="#ececec" stroke-width="0.5"/><line x1="533.25" y1="360.00" x2="597.5" y2="360.00" stroke="#ececec" stroke-width="0.5"/><line x1="533.25" y1="374.50" x2="597.5" y2="374.50" stroke="#ececec" stroke-width="0.5"/><line x1="533.25" y1="316.25" x2="533.25" y2="380.5" stroke="#dcdcdc" stroke-width="0.5"/><line x1="533.25" y1="380.5" x2="597.5" y2="380.5" stroke="#dcdcdc" stroke-width="0.5"/>
<line x1="546.10" y1="316.25" x2="546.10" y2="380.5" stroke="#ececec" stroke-width="0.5"/>
<line x1="558.95" y1="316.25" x2="558.95" y2="380.5" stroke="#ececec" stroke-width="0.5"/>
<line x1="571.80" y1="316.25" x2="571.80" y2="380.5" stroke="#ececec" stroke-width="0.5"/>
<line x1="584.65" y1="316.25" x2="584.65" y2="380.5" stroke="#ececec" stroke-width="0.5"/>
<line x1="597.50" y1="316.25" x2="597.50" y2="380.5" stroke="#ececec" stroke-width="0.5"/>
<rect x="529.55" y="315.65" width="1.7" height="1.2" fill="#808080"/><rect x="532.05" y="316.05" width="1.2" height="0.4" fill="#c4c4c4"/><rect x="529.55" y="330.65" width="1.7" height="1.2" fill="#808080"/><rect x="532.05" y="331.05" width="1.2" height="0.4" fill="#c4c4c4"/><rect x="529.55" y="344.90" width="1.7" height="1.2" fill="#808080"/><rect x="532.05" y="345.30" width="1.2" height="0.4" fill="#c4c4c4"/><rect x="529.55" y="359.40" width="1.7" height="1.2" fill="#808080"/><rect x="532.05" y="359.80" width="1.2" height="0.4" fill="#c4c4c4"/><rect x="529.55" y="373.90" width="1.7" height="1.2" fill="#808080"/><rect x="532.05" y="374.30" width="1.2" height="0.4" fill="#c4c4c4"/>
<rect x="539.00" y="382.20" width="1.4" height="1.1" fill="#8c8c8c"/><rect x="539.50" y="380.50" width="0.4" height="1" fill="#c4c4c4"/><rect x="551.85" y="382.20" width="1.4" height="1.1" fill="#8c8c8c"/><rect x="552.35" y="380.50" width="0.4" height="1" fill="#c4c4c4"/><rect x="564.70" y="382.20" width="1.4" height="1.1" fill="#8c8c8c"/><rect x="565.20" y="380.50" width="0.4" height="1" fill="#c4c4c4"/><rect x="577.55" y="382.20" width="1.4" height="1.1" fill="#8c8c8c"/><rect x="578.05" y="380.50" width="0.4" height="1" fill="#c4c4c4"/><rect x="590.40" y="382.20" width="1.4" height="1.1" fill="#8c8c8c"/><rect x="590.90" y="380.50" width="0.4" height="1" fill="#c4c4c4"/>
<polyline points="533.25,344.26 539.67,339.73 546.10,361.05 552.52,340.01 558.95,342.84 565.38,368.22 571.80,339.63 578.23,356.95 584.65,335.99 591.08,363.50 597.50,350.69" fill="none" stroke="#000" stroke-width="0.85" stroke-linejoin="round" stroke-linecap="round" opacity="0.085"/>
<polyline points="533.25,341.99 539.67,319.79 546.10,355.84 552.52,326.36 558.95,339.29 565.38,371.58 571.80,324.09 578.23,339.15 584.65,334.09 591.08,368.50 597.50,335.05" fill="none" stroke="#000" stroke-width="0.85" stroke-linejoin="round" stroke-linecap="round" opacity="0.085"/>
<polyline points="533.25,325.55 539.67,351.83 546.10,336.64 552.52,340.08 558.95,368.42 565.38,322.76 571.80,336.32 578.23,341.09 584.65,371.06 591.08,352.86 597.50,338.54" fill="none" stroke="#000" stroke-width="0.85" stroke-linejoin="round" stroke-linecap="round" opacity="0.085"/>
<polyline points="533.25,352.89 539.67,326.06 546.10,361.43 552.52,336.56 558.95,351.21 565.38,374.84 571.80,338.90 578.23,338.11 584.65,345.64 591.08,369.84 597.50,346.87" fill="none" stroke="#000" stroke-width="0.85" stroke-linejoin="round" stroke-linecap="round" opacity="0.085"/>
<polyline points="533.25,339.09 539.67,317.84 546.10,362.78 552.52,327.03 558.95,353.07 565.38,364.56 571.80,327.59 578.23,348.95 584.65,338.75 591.08,359.06 597.50,336.03" fill="none" stroke="#000" stroke-width="0.85" stroke-linejoin="round" stroke-linecap="round" opacity="0.085"/>
<polyline points="533.25,326.40 539.67,364.69 546.10,339.23 552.52,347.13 558.95,366.34 565.38,334.06 571.80,338.28 578.23,339.03 584.65,353.57 591.08,344.16 597.50,337.32" fill="none" stroke="#000" stroke-width="0.85" stroke-linejoin="round" stroke-linecap="round" opacity="0.085"/>
<polyline points="533.25,365.71 539.67,355.85 546.10,369.33 552.52,360.17 558.95,366.50 565.38,378.50 571.80,345.84 578.23,365.74 584.65,358.27 591.08,365.12 597.50,363.96" fill="none" stroke="#000" stroke-width="0.85" stroke-linejoin="round" stroke-linecap="round" opacity="0.085"/>
<polyline points="533.25,319.32 539.67,354.15 546.10,325.20 552.52,332.93 558.95,367.41 565.38,328.36 571.80,327.57 578.23,316.50 584.65,370.28 591.08,338.02 597.50,339.28" fill="none" stroke="#000" stroke-width="0.85" stroke-linejoin="round" stroke-linecap="round" opacity="0.085"/>
<polyline points="533.25,355.73 539.67,328.17 546.10,382.50 552.52,337.08 558.95,351.45 565.38,382.50 571.80,329.69 578.23,347.31 584.65,341.85 591.08,374.38 597.50,353.94" fill="none" stroke="#000" stroke-width="0.85" stroke-linejoin="round" stroke-linecap="round" opacity="0.085"/>
<polyline points="533.25,351.75 539.67,361.25 546.10,342.00 552.52,354.50 558.95,318.00 565.38,370.50 571.80,336.25 578.23,343.75 584.65,354.50 591.08,350.75 597.50,340.50" fill="none" stroke="#6e97ff" stroke-width="0.85" stroke-linejoin="round" stroke-linecap="round" />
<line x1="619.7" y1="323.81" x2="683.9" y2="323.81" stroke="#ececec" stroke-width="0.5"/><line x1="619.7" y1="338.92" x2="683.9" y2="338.92" stroke="#ececec" stroke-width="0.5"/><line x1="619.7" y1="354.24" x2="683.9" y2="354.24" stroke="#ececec" stroke-width="0.5"/><line x1="619.7" y1="369.36" x2="683.9" y2="369.36" stroke="#ececec" stroke-width="0.5"/><line x1="619.7" y1="315.5" x2="619.7" y2="380.3" stroke="#dcdcdc" stroke-width="0.5"/><line x1="619.7" y1="380.3" x2="683.9" y2="380.3" stroke="#dcdcdc" stroke-width="0.5"/>
<rect x="616.00" y="323.21" width="1.7" height="1.2" fill="#808080"/><rect x="618.50" y="323.61" width="1.2" height="0.4" fill="#c4c4c4"/><rect x="616.00" y="338.32" width="1.7" height="1.2" fill="#808080"/><rect x="618.50" y="338.72" width="1.2" height="0.4" fill="#c4c4c4"/><rect x="616.00" y="353.64" width="1.7" height="1.2" fill="#808080"/><rect x="618.50" y="354.04" width="1.2" height="0.4" fill="#c4c4c4"/><rect x="616.00" y="368.76" width="1.7" height="1.2" fill="#808080"/><rect x="618.50" y="369.16" width="1.2" height="0.4" fill="#c4c4c4"/>
<rect x="624.77" y="382.00" width="1.4" height="1.1" fill="#8c8c8c"/><rect x="625.27" y="380.30" width="0.4" height="1" fill="#c4c4c4"/><rect x="636.57" y="382.00" width="1.4" height="1.1" fill="#8c8c8c"/><rect x="637.07" y="380.30" width="0.4" height="1" fill="#c4c4c4"/><rect x="648.37" y="382.00" width="1.4" height="1.1" fill="#8c8c8c"/><rect x="648.87" y="380.30" width="0.4" height="1" fill="#c4c4c4"/><rect x="659.96" y="382.00" width="1.4" height="1.1" fill="#8c8c8c"/><rect x="660.46" y="380.30" width="0.4" height="1" fill="#c4c4c4"/><rect x="671.56" y="382.00" width="1.4" height="1.1" fill="#8c8c8c"/><rect x="672.06" y="380.30" width="0.4" height="1" fill="#c4c4c4"/><rect x="683.15" y="382.00" width="1.4" height="1.1" fill="#8c8c8c"/><rect x="683.65" y="380.30" width="0.4" height="1" fill="#c4c4c4"/>
<path d="M619.67,349.07 C620.63,350.21 623.50,354.00 625.47,355.90 C627.43,357.80 629.50,360.39 631.47,360.46 C633.44,360.52 635.33,358.45 637.27,356.31 C639.20,354.18 641.10,350.10 643.06,347.62 C645.03,345.13 647.14,341.99 649.07,341.41 C651.00,340.82 652.73,342.62 654.66,344.10 C656.59,345.58 658.70,349.28 660.66,350.31 C662.63,351.35 664.53,348.41 666.46,350.31 C668.39,352.21 670.32,364.39 672.26,361.70 C674.19,359.01 676.12,339.44 678.05,334.16 C679.99,328.88 682.88,330.71 683.85,330.02" fill="none" stroke="#d4d4d4" stroke-width="0.6" stroke-linecap="round"/>
<path d="M619.67,380.33 C620.63,378.50 623.50,371.77 625.47,369.36 C627.43,366.94 629.50,365.84 631.47,365.84 C633.44,365.84 635.33,369.46 637.27,369.36 C639.20,369.25 641.10,366.49 643.06,365.22 C645.03,363.94 647.14,363.42 649.07,361.70 C651.00,359.97 652.73,354.18 654.66,354.87 C656.59,355.56 658.70,362.84 660.66,365.84 C662.63,368.84 664.53,372.29 666.46,372.88 C668.39,373.46 670.32,370.53 672.26,369.36 C674.19,368.18 676.12,367.67 678.05,365.84 C679.99,364.01 682.88,359.63 683.85,358.39" fill="none" stroke="#d4d4d4" stroke-width="0.6" stroke-linecap="round"/>
<polyline points="619.67,338.92 625.47,346.58 631.47,342.03 637.27,346.58 643.06,361.70 649.07,316.15 654.66,342.86 660.66,338.92 666.46,354.24 672.26,338.92 678.05,350.31 683.85,346.58" fill="none" stroke="#6e97ff" stroke-width="0.8" stroke-linejoin="round" stroke-linecap="round" />
<circle cx="619.67" cy="338.92" r="1.0" fill="#cfdcff" stroke="#6e97ff" stroke-width="0.5"/>
<circle cx="625.47" cy="346.58" r="1.0" fill="#cfdcff" stroke="#6e97ff" stroke-width="0.5"/>
<circle cx="631.47" cy="342.03" r="1.0" fill="#cfdcff" stroke="#6e97ff" stroke-width="0.5"/>
<circle cx="637.27" cy="346.58" r="1.0" fill="#cfdcff" stroke="#6e97ff" stroke-width="0.5"/>
<circle cx="643.06" cy="361.70" r="1.0" fill="#cfdcff" stroke="#6e97ff" stroke-width="0.5"/>
<circle cx="649.07" cy="316.15" r="1.0" fill="#cfdcff" stroke="#6e97ff" stroke-width="0.5"/>
<circle cx="654.66" cy="342.86" r="1.0" fill="#cfdcff" stroke="#6e97ff" stroke-width="0.5"/>
<circle cx="660.66" cy="338.92" r="1.0" fill="#cfdcff" stroke="#6e97ff" stroke-width="0.5"/>
<circle cx="666.46" cy="354.24" r="1.0" fill="#cfdcff" stroke="#6e97ff" stroke-width="0.5"/>
<circle cx="672.26" cy="338.92" r="1.0" fill="#cfdcff" stroke="#6e97ff" stroke-width="0.5"/>
<circle cx="678.05" cy="350.31" r="1.0" fill="#cfdcff" stroke="#6e97ff" stroke-width="0.5"/>
<circle cx="683.85" cy="346.58" r="1.0" fill="#cfdcff" stroke="#6e97ff" stroke-width="0.5"/>
<line x1="445.8" y1="401" x2="445.8" y2="426" stroke="#dcdcdc" stroke-width="0.5"/>
<line x1="445.8" y1="410" x2="510" y2="410" stroke="#ececec" stroke-width="0.5"/>
<rect x="441.8" y="409.5" width="1.6" height="0.9" fill="#9a9a9a"/>
<path d="M472.5,426 V402.7 H478.5 V426" fill="none" stroke="#6e97ff" stroke-width="0.75"/>
<path d="M501,426 V420.5 H506 V416.5 H510" fill="none" stroke="#c8c8c8" stroke-width="0.6"/>
<rect x="529.6" y="422.4" width="1.3" height="1.3" fill="#a8a8a8"/>
<path d="M532.5,426 Q532.5,423.6 534.0,423.6 Q535.5,423.6 535.5,426" fill="none" stroke="#6e97ff" stroke-width="0.75"/>
<path d="M537,426 Q537,423.6 540.0,423.6 Q543,423.6 543,426" fill="none" stroke="#ff9d8f" stroke-width="0.75"/>
<path d="M545,426 Q545,423.6 546.1,423.6 Q547.2,423.6 547.2,426" fill="none" stroke="#6e97ff" stroke-width="0.75"/>
<path d="M548.5,426 Q548.5,423.6 549.75,423.6 Q551,423.6 551,426" fill="none" stroke="#4a78f0" stroke-width="0.75"/>
<path d="M552,426 Q552,423.6 554.0,423.6 Q556,423.6 556,426" fill="none" stroke="#8fb0ff" stroke-width="0.75"/>
<path d="M557,426 Q557,423.6 559.5,423.6 Q562,423.6 562,426" fill="none" stroke="#6fd0c0" stroke-width="0.75"/>
<path d="M563,426 Q563,423.6 564.5,423.6 Q566,423.6 566,426" fill="none" stroke="#6e97ff" stroke-width="0.75"/>
<path d="M567,426 Q567,423.6 568.2,423.6 Q569.4,423.6 569.4,426" fill="none" stroke="#4a78f0" stroke-width="0.75"/>
<path d="M570.4,426 Q570.4,423.6 573.4,423.6 Q576.4,423.6 576.4,426" fill="none" stroke="#ff9d8f" stroke-width="0.75"/>
<path d="M577.4,426 Q577.4,423.6 579.4,423.6 Q581.4,423.6 581.4,426" fill="none" stroke="#6fd0c0" stroke-width="0.75"/>
<path d="M582.2,426 Q582.2,423.6 584.2,423.6 Q586.2,423.6 586.2,426" fill="none" stroke="#6fd0c0" stroke-width="0.75"/>
<path d="M587,426 Q587,423.6 589.0,423.6 Q591,423.6 591,426" fill="none" stroke="#9adfd2" stroke-width="0.75"/>
<path d="M592,426 Q592,423.6 593.2,423.6 Q594.4,423.6 594.4,426" fill="none" stroke="#6e97ff" stroke-width="0.75"/>
<path d="M595.2,426 Q595.2,423.6 596.5,423.6 Q597.8,423.6 597.8,426" fill="none" stroke="#ff8070" stroke-width="0.75"/>
<rect x="616" y="422" width="1.4" height="1.4" fill="#aaa"/>
<rect x="619" y="423.2" width="65" height="1.6" fill="#d9d9d9"/>
</svg>

  <!-- hover select button on chart 4 -->
  <div class="t" style="left:114.2px;top:197px;width:29px;height:11.7px;border-radius:2.5px;background:#0c34d0;color:#fff;font-size:6.7px;line-height:11.7px;text-align:center;padding-top:0.6px;-webkit-text-stroke:0.15px #fff">Select</div>
  <!-- resize grip -->
  <div class="a" style="left:341.2px;top:356.9px;width:8.5px;height:8.5px;background:#454545"></div>
</div>

<div class="a" id="docktop"></div>
<div class="a" id="dock"></div>
<div class="a" id="dockedge"></div>
<svg class="a" style="left:696px;top:38px" width="24" height="390" viewBox="696 38 24 390"><defs><linearGradient id="cg"><stop offset="0" stop-color="#f0f0f0"/><stop offset="1" stop-color="#4a4a4a"/></linearGradient><linearGradient id="gr"><stop offset="0" stop-color="#3c3c3c"/><stop offset="1" stop-color="#f4f4f4"/></linearGradient></defs><path d="M713.4,39.3 L712.2,40.6 L713.4,41.9 M715.6,39.3 L714.4,40.6 L715.6,41.9" fill="none" stroke="#bdbdbd" stroke-width="0.6"/>
<rect x="703.4" y="47.15" width="11" height="0.9" fill="#3f3f3f"/>
<rect x="702" y="52" width="13.8" height="11.3" rx="0.8" fill="#333"/>
<path d="M704.9,61.6 V53.2 H708.1 L709.1,54.5 H714.6999999999999 V61.6 Z" fill="none" stroke="#c8c8c8" stroke-width="0.8" stroke-linejoin="round"/><path d="M706.5,60.2 V58.400000000000006 L708.3,56.400000000000006 L709.8,58.2 L711.3,56.400000000000006 L713.1,58.400000000000006 V60.2 Z" fill="#c8c8c8"/>
<rect x="702" y="67.6" width="13.8" height="10.8" rx="0.8" fill="#5c5c5c"/>
<path d="M704.9,77.2 V68.8 H708.1 L709.1,70.1 H714.6999999999999 V77.2 Z" fill="none" stroke="#9c9c9c" stroke-width="0.8" stroke-linejoin="round"/><path d="M706.5,75.8 V74.0 L708.3,72.0 L709.8,73.8 L711.3,72.0 L713.1,74.0 V75.8 Z" fill="#9c9c9c"/>
<path d="M709.4,85.3 L714.2,88.2 L709.4,91.1 L704.6,88.2 Z" fill="#c4c4c4"/><path d="M704.9,90.6 L709.4,93.6 L713.9,90.6" fill="none" stroke="#c4c4c4" stroke-width="1"/>
<path d="M705,108.7 L708,101.5 H709 L712,108.7 M706.2,106.2 H710.8" fill="none" stroke="#c4c4c4" stroke-width="0.9"/><rect x="713.3" y="100" width="0.8" height="9.8" fill="#c4c4c4"/>
<path d="M709.2,117.4 H712.6 V125.2 H710.6 V117.4 M709.4,117.4 C705,117.4 705,122.4 709.4,122.4 V117.4 Z" fill="#c4c4c4"/><rect x="709.2" y="117.4" width="3.4" height="7.8" fill="#c4c4c4"/>
<rect x="704.8" y="133.1" width="9.6" height="0.8" fill="#c4c4c4"/><rect x="704.8" y="135.7" width="9.6" height="1.2" fill="#c4c4c4"/><rect x="704.8" y="138.5" width="9.6" height="1.7" fill="#c4c4c4"/>
<path d="M709.2,149 C712.4,149 714.4,150.4 714.4,152.2 C714.4,153.6 713,153.6 712.2,153.6 C711.2,153.6 711,154.4 711.4,155 C711.8,155.7 710.6,155.8 709.2,155.8 C706.2,155.8 704.2,154.2 704.2,152.4 C704.2,150.4 706.2,149 709.2,149 Z" fill="#c4c4c4"/><g fill="#515151"><circle cx="706.6" cy="152.6" r="0.8"/><circle cx="708" cy="150.8" r="0.8"/><circle cx="710.4" cy="150.5" r="0.8"/><circle cx="712.4" cy="151.6" r="0.8"/></g>
<path d="M705.2,172.2 V164.2 C710,164.2 713.8,167.4 713.8,172.2 Z" fill="url(#cg)" stroke="#b4b4b4" stroke-width="0.6"/>
<circle cx="707.4" cy="182.6" r="3.3" fill="#bdbdbd"/><circle cx="710.6" cy="185.4" r="3.4" fill="#828282" stroke="#a4a4a4" stroke-width="0.5"/>
<rect x="704.8" y="196.3" width="9.3" height="6.8" fill="#bdbdbd"/><g fill="#777"><rect x="705.8" y="199.9" width="1.8" height="1.8"/><rect x="708.6" y="199.9" width="1.8" height="1.8"/><rect x="711.4" y="199.9" width="1.8" height="1.8"/><rect x="705.8" y="197.2" width="1.8" height="1.6" fill="#9a9a9a"/><rect x="708.6" y="197.2" width="1.8" height="1.6" fill="#9a9a9a"/><rect x="711.4" y="197.2" width="1.8" height="1.6" fill="#9a9a9a"/></g>
<rect x="698.7" y="209.29999999999998" width="21.3" height="0.9" fill="#3c3c3c"/>
<rect x="703.4" y="211.65" width="11" height="0.9" fill="#3f3f3f"/>
<rect x="706.3" y="219.6" width="6.2" height="6.2" fill="none" stroke="#c0c0c0" stroke-width="0.7" stroke-dasharray="1.4 0.9"/><g fill="#c0c0c0"><rect x="704.8" y="218.2" width="2.2" height="2.2"/><rect x="711.8" y="218.2" width="2.2" height="2.2"/><rect x="704.8" y="225" width="2.2" height="2.2"/><rect x="711.8" y="225" width="2.2" height="2.2"/></g><rect x="708.8" y="222.1" width="1.2" height="1.2" fill="#a0a0a0"/>
<rect x="698.7" y="232.1" width="21.3" height="0.9" fill="#3c3c3c"/>
<rect x="703.4" y="234.65" width="11" height="0.9" fill="#3f3f3f"/>
<rect x="705.3" y="241.5" width="5.3" height="5.3" fill="#c0c0c0"/><rect x="708.5" y="244.6" width="5.2" height="5.2" fill="#9a9a9a" stroke="#c0c0c0" stroke-width="0.6"/>
<rect x="705.3" y="256.7" width="0.9" height="9.3" fill="#c4c4c4"/><rect x="707.1" y="258" width="3.8" height="3" fill="#c4c4c4"/><rect x="707.1" y="262.7" width="6.6" height="2.6" fill="#c4c4c4"/>
<rect x="698.7" y="271.20000000000005" width="21.3" height="0.9" fill="#3c3c3c"/>
<rect x="703.4" y="273.45" width="11" height="0.9" fill="#3f3f3f"/>
<rect x="704.6" y="281" width="10" height="7" fill="url(#gr)" stroke="#b8b8b8" stroke-width="0.6"/>
<rect x="698.7" y="293.90000000000003" width="21.3" height="0.9" fill="#3c3c3c"/>
<rect x="703.4" y="296.75" width="11" height="0.9" fill="#3f3f3f"/>
<path d="M705,311.0 V302.4 H708.2 L709.2,303.7 H714.6 V311.0 Z" fill="none" stroke="#b4b4b4" stroke-width="0.8" stroke-linejoin="round"/><path d="M706.6,309.6 V307.59999999999997 L708.4,305.59999999999997 L709.9,307.4 L711.4,305.59999999999997 L713.2,307.59999999999997 V309.6 Z" fill="#b4b4b4"/>
<rect x="698.7" y="316.90000000000003" width="21.3" height="0.9" fill="#3c3c3c"/>
<rect x="703.4" y="319.55" width="11" height="0.9" fill="#3f3f3f"/>
<circle cx="709.6" cy="330.1" r="3.5" fill="#c4c4c4"/><circle cx="709.6" cy="330.1" r="4.7" fill="none" stroke="#a8a8a8" stroke-width="0.9" stroke-dasharray="0.8 0.9"/>
<rect x="707.4" y="342.4" width="7" height="6.6" fill="#5e5e5e" stroke="#bdbdbd" stroke-width="0.7"/><circle cx="707.6" cy="348.6" r="1.7" fill="#6e6e6e" stroke="#bdbdbd" stroke-width="0.6"/>
<rect x="698.7" y="354.6" width="21.3" height="0.9" fill="#3c3c3c"/></svg>

<div class="a" id="status"></div>
<svg class="a" style="left:0;top:420px" width="720" height="15" viewBox="0 420 720 15"><rect x="23.7" y="425.5" width="697" height="9.5" fill="#4a4a4a"/>
<rect x="23.7" y="425.2" width="324" height="0.7" fill="#484848"/>
<rect x="26.3" y="426.8" width="27" height="8.2" fill="#3e3e3e"/>
<rect x="54.6" y="426.8" width="9.8" height="8.2" fill="#464646"/>
<path d="M57.6,430.4 L59.3,432 L61,430.4" fill="none" stroke="#d4d4d4" stroke-width="0.8"/>
<rect x="66.5" y="426.8" width="28.5" height="8.2" fill="#3e3e3e"/>
<rect x="96.1" y="426.8" width="8.8" height="8.2" fill="#464646"/>
<path d="M98.4,430.4 L100.1,432 L101.8,430.4" fill="none" stroke="#d4d4d4" stroke-width="0.8"/>
<g fill="#767676"><rect x="110.6" y="429.2" width="0.8" height="4"/><path d="M114.6,429.2 V433.2 L111.8,431.2 Z"/><path d="M123,429.2 V433.2 L120.2,431.2 Z"/><path d="M166.6,429.2 V433.2 L169.4,431.2 Z"/><path d="M173.6,429.2 V433.2 L176.4,431.2 Z"/><rect x="176.8" y="429.2" width="0.8" height="4"/></g>
<rect x="128" y="426.8" width="23.2" height="8.2" fill="#3e3e3e"/>
<rect x="152.2" y="426.8" width="8.6" height="8.2" fill="#464646"/>
<path d="M154.6,430.4 L156.3,432 L158,430.4" fill="none" stroke="#d4d4d4" stroke-width="0.8"/>
<path d="M301.4,429 V433.4 L304.4,431.2 Z" fill="#e8e8e8"/>
<path d="M313.6,429.4 L311.8,431.2 L313.6,433" fill="none" stroke="#7c7c7c" stroke-width="0.7"/>
<rect x="346.5" y="425.2" width="351.2" height="9.8" fill="#464646"/><rect x="346.5" y="425.2" width="351.2" height="3.8" fill="#3e3e3e"/><rect x="346.5" y="425.2" width="351.2" height="1" fill="#262626"/>
<rect x="517" y="426.5" width="11" height="2" rx="0.9" fill="#333"/>
<rect x="519.8" y="430.8" width="13.4" height="4.2" rx="2" fill="#575757"/>
<rect x="698.7" y="425.3" width="21.3" height="9.7" fill="#525252"/><rect x="698.7" y="426.6" width="21.3" height="0.7" fill="#4a4a4a"/>
<path d="M685.4,433 L687.4,431" stroke="#6c6c6c" stroke-width="0.6"/></svg>
<div class="t" style="left:27.90px;top:428.02px;font-size:6.6px;color:#f0f0f0;font-weight:bold;transform:scaleX(0.871);transform-origin:0 0;">17,79%</div>
<div class="t" style="left:68.90px;top:428.02px;font-size:6.6px;color:#f0f0f0;font-weight:bold;transform:scaleX(0.887);transform-origin:0 0;">0°</div>
<div class="t" style="left:131.40px;top:428.02px;font-size:6.6px;color:#f0f0f0;font-weight:bold;">1</div>
<div class="t" style="left:210.00px;top:428.02px;font-size:6.6px;color:#d8d8d8;transform:scaleX(0.933);transform-origin:0 0;">Toggle Direct Selection</div>

</div>
</body>
</html>
